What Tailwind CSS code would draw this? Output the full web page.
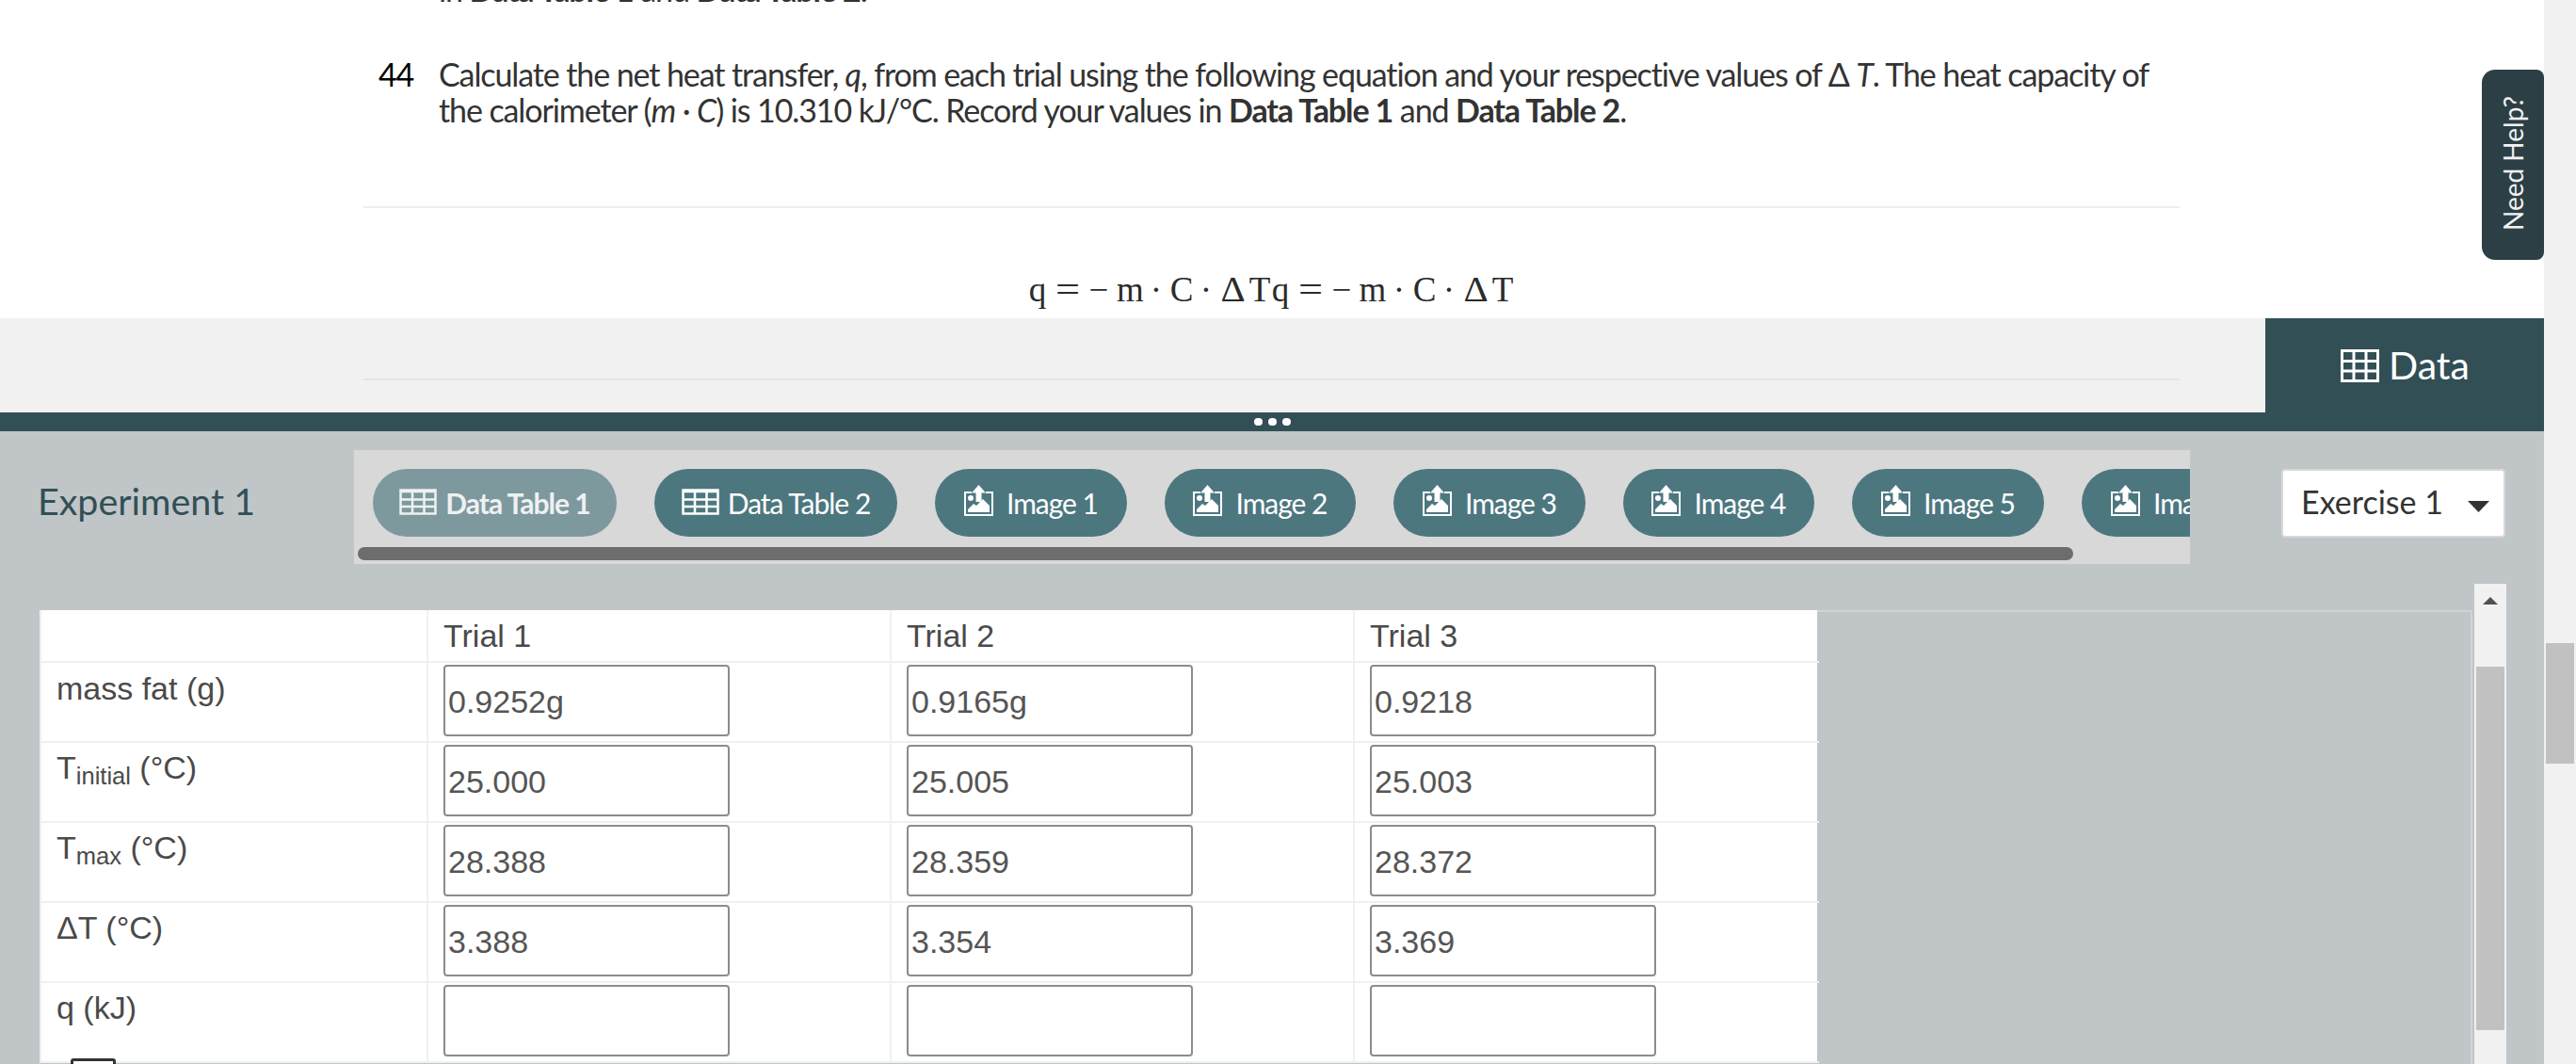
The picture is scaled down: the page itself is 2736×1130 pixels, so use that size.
<!doctype html>
<html><head><meta charset="utf-8"><script src="https://cdn.jsdelivr.net/npm/@tailwindcss/browser@4"></script></head>
<body class="m-0 overflow-hidden bg-white">
<div class="relative flex h-[1130px] w-[2736px] overflow-hidden font-['Lato',sans-serif]">
  <div class="flex w-[2702px] flex-col">
    <div class="h-[338px] overflow-hidden bg-white pl-[386px] pr-[387px]">
      <div class="-mt-[30px] h-[38px] whitespace-nowrap pl-[80px] text-[34px] leading-[38px] tracking-[-1.1px] text-[#333]">in <b>Data Table 1</b> and <b>Data Table 2</b>.</div>
      <div class="mt-[52px] flex text-[34px] leading-[38px] tracking-[-1.1px] text-[#333]">
        <span class="w-[80px] pl-[16px] text-black">44</span>
        <p class="whitespace-nowrap">Calculate the net heat transfer, <i>q</i>, from each trial using the following equation and your respective values of Δ <i>T</i>. The heat capacity of<br>the calorimeter (<i>m</i> · <i>C</i>) is 10.310 kJ/°C. Record your values in <b>Data Table 1</b> and <b>Data Table 2</b>.</p>
      </div>
      <div class="mt-[83px] h-[2px] bg-[#eeeeee]"></div>
      <div class="ml-[706px] mt-[67px] flex whitespace-nowrap font-['Liberation_Serif',serif] text-[37px] leading-[40px] text-[#2b2b2b]">
        <span class="flex w-[20px] justify-center">q</span>
        <span class="ml-[9px] flex w-[26px] scale-x-125 justify-center">=</span>
        <span class="ml-[10px] flex w-[20px] justify-center">−</span>
        <span class="ml-[9px] flex w-[29px] justify-center">m</span>
        <span class="ml-[10px] flex w-[6px] justify-center">·</span>
        <span class="ml-[12px] flex w-[24px] justify-center">C</span>
        <span class="ml-[11px] flex w-[6px] justify-center">·</span>
        <span class="ml-[12px] flex w-[27px] scale-x-110 justify-center">Δ</span>
        <span class="ml-[5px] flex w-[20px] justify-center">T</span>
        <span class="ml-[2px] flex w-[20px] justify-center">q</span>
        <span class="ml-[9px] flex w-[26px] scale-x-125 justify-center">=</span>
        <span class="ml-[10px] flex w-[20px] justify-center">−</span>
        <span class="ml-[8px] flex w-[30px] justify-center">m</span>
        <span class="ml-[10px] flex w-[6px] justify-center">·</span>
        <span class="ml-[12px] flex w-[24px] justify-center">C</span>
        <span class="ml-[11px] flex w-[6px] justify-center">·</span>
        <span class="ml-[12px] flex w-[27px] scale-x-110 justify-center">Δ</span>
        <span class="ml-[5px] flex w-[20px] justify-center">T</span>
      </div>
    </div>
    <div class="flex h-[100px] bg-[#f1f1f1]">
      <div class="flex-1 pl-[386px] pr-[91px] pt-[64px]"><div class="h-[2px] bg-[#e4e4e4]"></div></div>
      <div class="flex w-[296px] items-center gap-[10px] bg-[#324f56] pl-[80px] text-[41px] text-white">
        <svg class="h-[35px] w-[41px]" viewBox="0 0 41 35" fill="none" stroke="white" stroke-width="3"><rect x="1.5" y="1.5" width="38" height="32"/><path d="M1.5 12.5H39.5M1.5 23H39.5M14 1.5V33.5M27 1.5V33.5"/></svg>
        <span>Data</span>
      </div>
    </div>
    <div class="flex h-[20px] items-center justify-center gap-[6px] bg-[#324f56]">
      <i class="h-[8px] w-[9px] rounded-full bg-white"></i><i class="h-[8px] w-[9px] rounded-full bg-white"></i><i class="h-[8px] w-[9px] rounded-full bg-white"></i>
    </div>
    <div class="min-h-0 flex-1 overflow-hidden bg-[#c0c5c8]">
      <div class="flex pt-[20px]">
        <div class="w-[376px] pl-[40px] pt-[29px] text-[39.4px] leading-[50px] text-[#324f56]">Experiment 1</div>
        <div class="relative h-[121px] w-[1950px] overflow-hidden bg-[#d8d8d8]">
          <div class="flex gap-[40px] pl-[20px] pt-[20px] text-[30px] tracking-[-1px] text-white">
            <div class="flex h-[72px] w-[259px] shrink-0 items-center justify-center gap-[9px] rounded-full bg-[#7e999e] font-bold text-[#eef1f2]">
              <svg class="-mt-[3px] h-[28px] w-[40px]" viewBox="0 0 40 28" fill="none" stroke="#eef1f2" stroke-width="2.5"><rect x="1.5" y="1.5" width="37" height="25"/><path d="M1 3H39M1 11.5H39M1 19H39M14 1V27M26.5 1V27"/></svg><span>Data Table 1</span></div>
            <div class="flex h-[72px] w-[258px] shrink-0 items-center justify-center gap-[9px] rounded-full bg-[#4d777f]">
              <svg class="-mt-[3px] h-[28px] w-[40px]" viewBox="0 0 40 28" fill="none" stroke="white" stroke-width="2.5"><rect x="1.5" y="1.5" width="37" height="25"/><path d="M1 3H39M1 11.5H39M1 19H39M14 1V27M26.5 1V27"/></svg><span>Data Table 2</span></div>
            <div class="flex h-[72px] w-[204px] shrink-0 items-center justify-center gap-[14px] rounded-full bg-[#4d777f]"><svg class="-mt-[6px] h-[33px] w-[31px]" viewBox="0 0 31 33" fill="white"><path fill="none" stroke="white" stroke-width="2" d="M8 8H1V32H30V8H23"/><path d="M15.5 0L23 8.5H18.5V18H12.5V8.5H8Z"/><circle cx="7" cy="14" r="3"/><path d="M4 29V26L10 20L13 22L20 15L27 22V29Z"/></svg><span>Image 1</span></div>
            <div class="flex h-[72px] w-[203px] shrink-0 items-center justify-center gap-[14px] rounded-full bg-[#4d777f]"><svg class="-mt-[6px] h-[33px] w-[31px]" viewBox="0 0 31 33" fill="white"><path fill="none" stroke="white" stroke-width="2" d="M8 8H1V32H30V8H23"/><path d="M15.5 0L23 8.5H18.5V18H12.5V8.5H8Z"/><circle cx="7" cy="14" r="3"/><path d="M4 29V26L10 20L13 22L20 15L27 22V29Z"/></svg><span>Image 2</span></div>
            <div class="flex h-[72px] w-[204px] shrink-0 items-center justify-center gap-[14px] rounded-full bg-[#4d777f]"><svg class="-mt-[6px] h-[33px] w-[31px]" viewBox="0 0 31 33" fill="white"><path fill="none" stroke="white" stroke-width="2" d="M8 8H1V32H30V8H23"/><path d="M15.5 0L23 8.5H18.5V18H12.5V8.5H8Z"/><circle cx="7" cy="14" r="3"/><path d="M4 29V26L10 20L13 22L20 15L27 22V29Z"/></svg><span>Image 3</span></div>
            <div class="flex h-[72px] w-[203px] shrink-0 items-center justify-center gap-[14px] rounded-full bg-[#4d777f]"><svg class="-mt-[6px] h-[33px] w-[31px]" viewBox="0 0 31 33" fill="white"><path fill="none" stroke="white" stroke-width="2" d="M8 8H1V32H30V8H23"/><path d="M15.5 0L23 8.5H18.5V18H12.5V8.5H8Z"/><circle cx="7" cy="14" r="3"/><path d="M4 29V26L10 20L13 22L20 15L27 22V29Z"/></svg><span>Image 4</span></div>
            <div class="flex h-[72px] w-[204px] shrink-0 items-center justify-center gap-[14px] rounded-full bg-[#4d777f]"><svg class="-mt-[6px] h-[33px] w-[31px]" viewBox="0 0 31 33" fill="white"><path fill="none" stroke="white" stroke-width="2" d="M8 8H1V32H30V8H23"/><path d="M15.5 0L23 8.5H18.5V18H12.5V8.5H8Z"/><circle cx="7" cy="14" r="3"/><path d="M4 29V26L10 20L13 22L20 15L27 22V29Z"/></svg><span>Image 5</span></div>
            <div class="flex h-[72px] w-[204px] shrink-0 items-center justify-center gap-[14px] rounded-full bg-[#4d777f]"><svg class="-mt-[6px] h-[33px] w-[31px]" viewBox="0 0 31 33" fill="white"><path fill="none" stroke="white" stroke-width="2" d="M8 8H1V32H30V8H23"/><path d="M15.5 0L23 8.5H18.5V18H12.5V8.5H8Z"/><circle cx="7" cy="14" r="3"/><path d="M4 29V26L10 20L13 22L20 15L27 22V29Z"/></svg><span>Image 6</span></div>
          </div>
          <div class="absolute left-[4px] top-[103px] h-[14px] w-[1822px] rounded-full bg-[#6d6d6d]"></div>
        </div>
        <div class="ml-[97px] mt-[20px] flex h-[73px] w-[238px] items-center justify-between rounded-[4px] border-2 border-[#d8d8d8] bg-white pl-[19px] pr-[15px] text-[34px] text-[#333]">
          <span class="-mt-[5px]">Exercise 1</span><svg class="mt-[6px] h-[12px] w-[23px]" viewBox="0 0 23 12" fill="#333"><path d="M0 0H23L11.5 12Z"/></svg>
        </div>
      </div>
      <div class="mt-[21px] flex h-[510px] pl-[42px]">
        <div class="mr-[2px] w-[2584px] pt-[28px]">
          <div class="h-full border-r-2 border-t-2 border-[#d0d4d6]">
            <div class="-mt-[2px] grid w-[1888px] grid-cols-[411px_492px_492px_493px] grid-rows-[56px_85px_85px_85px_85px_85px] border-l-2 border-[#eef0f0] bg-white font-['Liberation_Sans',sans-serif] text-[34px] leading-[38px] text-[#4a4a4a]">
              <div class="border-b-2 border-r-2 border-[#f0f0f0]"></div>
              <div class="border-b-2 border-r-2 border-[#f0f0f0] pl-[16px] pt-[8px]">Trial 1</div>
              <div class="border-b-2 border-r-2 border-[#f0f0f0] pl-[16px] pt-[8px]">Trial 2</div>
              <div class="border-b-2 border-[#f0f0f0] pl-[16px] pt-[8px]">Trial 3</div>

              <div class="border-b-2 border-r-2 border-[#f0f0f0] pl-[16px] pt-[8px]">mass fat (g)</div>
              <div class="border-b-2 border-r-2 border-[#f0f0f0] pl-[16px] pt-[2px]"><div class="flex h-[76px] w-[304px] items-center rounded-[4px] border-2 border-[#8c8c8c] pl-[3px] pt-[2px] text-[#555]">0.9252g</div></div>
              <div class="border-b-2 border-r-2 border-[#f0f0f0] pl-[16px] pt-[2px]"><div class="flex h-[76px] w-[304px] items-center rounded-[4px] border-2 border-[#8c8c8c] pl-[3px] pt-[2px] text-[#555]">0.9165g</div></div>
              <div class="border-b-2 border-[#f0f0f0] pl-[16px] pt-[2px]"><div class="flex h-[76px] w-[304px] items-center rounded-[4px] border-2 border-[#8c8c8c] pl-[3px] pt-[2px] text-[#555]">0.9218</div></div>

              <div class="border-b-2 border-r-2 border-[#f0f0f0] pl-[16px] pt-[7px]">T<sub>initial</sub> (°C)</div>
              <div class="border-b-2 border-r-2 border-[#f0f0f0] pl-[16px] pt-[2px]"><div class="flex h-[76px] w-[304px] items-center rounded-[4px] border-2 border-[#8c8c8c] pl-[3px] pt-[2px] text-[#555]">25.000</div></div>
              <div class="border-b-2 border-r-2 border-[#f0f0f0] pl-[16px] pt-[2px]"><div class="flex h-[76px] w-[304px] items-center rounded-[4px] border-2 border-[#8c8c8c] pl-[3px] pt-[2px] text-[#555]">25.005</div></div>
              <div class="border-b-2 border-[#f0f0f0] pl-[16px] pt-[2px]"><div class="flex h-[76px] w-[304px] items-center rounded-[4px] border-2 border-[#8c8c8c] pl-[3px] pt-[2px] text-[#555]">25.003</div></div>

              <div class="border-b-2 border-r-2 border-[#f0f0f0] pl-[16px] pt-[7px]">T<sub>max</sub> (°C)</div>
              <div class="border-b-2 border-r-2 border-[#f0f0f0] pl-[16px] pt-[2px]"><div class="flex h-[76px] w-[304px] items-center rounded-[4px] border-2 border-[#8c8c8c] pl-[3px] pt-[2px] text-[#555]">28.388</div></div>
              <div class="border-b-2 border-r-2 border-[#f0f0f0] pl-[16px] pt-[2px]"><div class="flex h-[76px] w-[304px] items-center rounded-[4px] border-2 border-[#8c8c8c] pl-[3px] pt-[2px] text-[#555]">28.359</div></div>
              <div class="border-b-2 border-[#f0f0f0] pl-[16px] pt-[2px]"><div class="flex h-[76px] w-[304px] items-center rounded-[4px] border-2 border-[#8c8c8c] pl-[3px] pt-[2px] text-[#555]">28.372</div></div>

              <div class="border-b-2 border-r-2 border-[#f0f0f0] pl-[16px] pt-[7px]">ΔT (°C)</div>
              <div class="border-b-2 border-r-2 border-[#f0f0f0] pl-[16px] pt-[2px]"><div class="flex h-[76px] w-[304px] items-center rounded-[4px] border-2 border-[#8c8c8c] pl-[3px] pt-[2px] text-[#555]">3.388</div></div>
              <div class="border-b-2 border-r-2 border-[#f0f0f0] pl-[16px] pt-[2px]"><div class="flex h-[76px] w-[304px] items-center rounded-[4px] border-2 border-[#8c8c8c] pl-[3px] pt-[2px] text-[#555]">3.354</div></div>
              <div class="border-b-2 border-[#f0f0f0] pl-[16px] pt-[2px]"><div class="flex h-[76px] w-[304px] items-center rounded-[4px] border-2 border-[#8c8c8c] pl-[3px] pt-[2px] text-[#555]">3.369</div></div>

              <div class="border-b-2 border-r-2 border-[#f0f0f0] pl-[16px] pt-[7px]"><div>q (kJ)</div><div class="ml-[15px] mt-[35px] h-[40px] w-[48px] rounded-[3px] border-[3px] border-[#333] bg-white"></div></div>
              <div class="border-b-2 border-r-2 border-[#f0f0f0] pl-[16px] pt-[2px]"><div class="h-[76px] w-[304px] rounded-[4px] border-2 border-[#8c8c8c]"></div></div>
              <div class="border-b-2 border-r-2 border-[#f0f0f0] pl-[16px] pt-[2px]"><div class="h-[76px] w-[304px] rounded-[4px] border-2 border-[#8c8c8c]"></div></div>
              <div class="border-b-2 border-[#f0f0f0] pl-[16px] pt-[2px]"><div class="h-[76px] w-[304px] rounded-[4px] border-2 border-[#8c8c8c]"></div></div>
            </div>
          </div>
        </div>
        <div class="w-[34px] bg-[#f1f1f1] px-[2px] pt-[14px]">
          <svg class="mx-auto h-[8px] w-[16px]" viewBox="0 0 16 8" fill="#505050"><path d="M8 0L16 8H0Z"/></svg>
          <div class="mt-[66px] h-[386px] bg-[#c1c1c1]"></div>
        </div>
      </div>
    </div>
  </div>
  <div class="w-[34px] bg-[#f1f1f1] px-[2px] pt-[683px]"><div class="h-[128px] bg-[#c1c1c1]"></div></div>
  <div class="absolute left-[2636px] top-[74px] flex h-[202px] w-[66px] rotate-180 items-center justify-center rounded-r-[14px] rounded-l-[8px] bg-[#2c3f45] pt-[3px] text-[28px] text-[#f2f2f2] [writing-mode:vertical-rl]">Need Help?</div>
</div>
</body></html>
